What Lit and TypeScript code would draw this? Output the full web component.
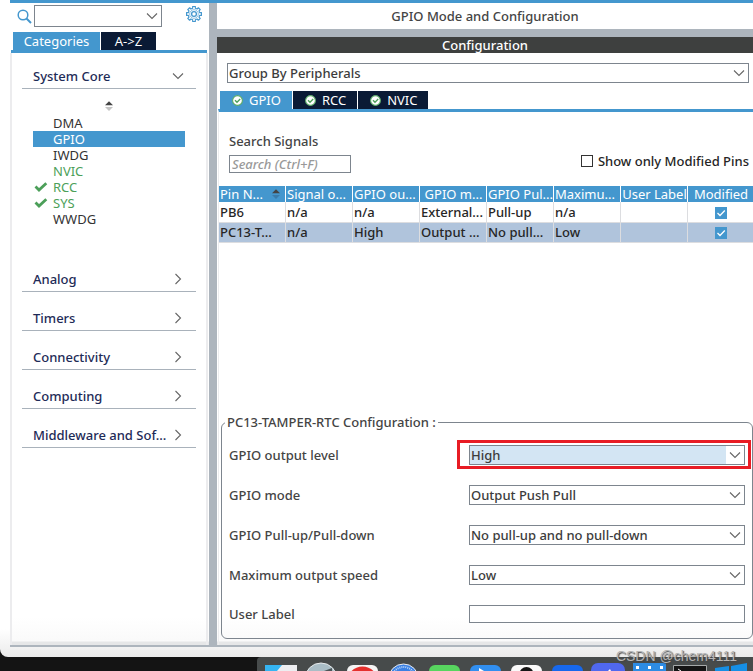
import { LitElement, html, svg, css } from "lit";
import { customElement, property } from "lit/decorators.js";
import { classMap } from "lit/directives/class-map.js";

const down = html`<svg class="chev" width="12" height="8" viewBox="0 0 12 8" aria-hidden="true"><path d="M1 1.500 6 6.500 11 1.500" fill="none" stroke="#666" stroke-width="1.100"/></svg>`;
const right = html`<svg class="chev" width="12" height="12" viewBox="0 0 12 12" aria-hidden="true"><path d="M3.500 1 8.500 6 3.500 11" fill="none" stroke="#666" stroke-width="1.100"/></svg>`;
const sorter = (bottom: string) => html`<svg class="sorter" width="8" height="10" viewBox="0 0 8 10" aria-hidden="true"><path d="M0 4.300 4 .3 8 4.300z" fill="#444"/><path d="M0 6 4 10 8 6z" fill=${bottom}/></svg>`;
const okBadge = html`<svg width="11" height="11" viewBox="0 0 11 11" aria-hidden="true"><circle cx="5.500" cy="5.500" r="4.900" fill="#fff" stroke="#5aab66" stroke-width="1.100"/><path d="M3 5.200 5 7.300 8.200 4" fill="none" stroke="#4c9f59" stroke-width="1.300"/></svg>`;
const doneMark = html`<svg width="14" height="10" viewBox="0 0 14 10" aria-hidden="true"><path d="M1.500 4.500 5 8 12.300 1.200" fill="none" stroke="#4c9f59" stroke-width="2.800"/></svg>`;

const gearPath = Array.from({ length: 8 }, (_, i) => {
  const pt = (r: number, deg: number) => {
    const a = ((i * 45 + deg) * Math.PI) / 180;
    return `${(8 + r * Math.sin(a)).toFixed(2)} ${(8 - r * Math.cos(a)).toFixed(2)}`;
  };
  return `${i ? "L" : "M"}${pt(5.9, -13)}L${pt(7.6, -10)}L${pt(7.6, 10)}L${pt(5.9, 13)}`;
}).join("") + "Z";

const shared = css`
  :host, * { box-sizing: border-box; }
  button, select, input { font: inherit; color: inherit; border-radius: 0; margin: 0; }
  button { border: 0; padding: 0; background: none; text-align: left; cursor: default; }
  .combo { display: grid; grid-template-columns: minmax(0, 1fr) 19px; align-items: center; height: 20px; border: 1px solid #7d858e; background: #fff; color: #3c3c3c; }
  .combo select { grid-area: 1 / 1 / 2 / 3; width: 100%; height: 18px; padding: 0 20px 0 1px; border: 0; background: none; appearance: none; outline: none; line-height: 18px; }
  .combo .chev { grid-area: 1 / 2; justify-self: center; pointer-events: none; }
`;

@customElement("combo-box")
class ComboBox extends LitElement {
  @property() value = "";
  @property() label = "";
  @property({ type: Boolean }) active = false;
  static styles = [shared, css`
    :host { display: block; }
    .tall { height: 22px; }
    .active { background: linear-gradient(to left, #fff 18px, #d3e5f3 18px); }
  `];
  render() {
    return html`<div class=${classMap({ combo: true, active: this.active, tall: !this.value })}>
      <select aria-label=${this.label}><option>${this.value}</option></select>${down}
    </div>`;
  }
}

@customElement("category-panel")
class CategoryPanel extends LitElement {
  static styles = [shared, css`
    :host { display: flex; flex-direction: column; width: 199px; flex: none; }
    .search { display: flex; align-items: center; height: 29px; padding: 0 7px 4px 7px; }
    .search combo-box { width: 128px; margin: 0 auto 0 2px; }
    .tabs { display: flex; gap: 1px; height: 18px; margin: 0 3px; }
    .tab { width: 87px; background: #4497ce; color: #fff; text-align: center; line-height: 17px; }
    .tab.dark { width: 55px; background: #0a1a35; }
    .tree { flex: 1; margin-right: 1px; padding: 14px 10px; border: solid #ececee; border-width: 0 2px; }
    .rule { height: 3px; margin: 0 2px 0 1px; background: #4497ce; }
    .group { display: flex; width: 100%; height: 22px; padding: 0 12px 4px 11px; align-items: center; justify-content: space-between; border-bottom: 1px solid #a9b2bb; color: #1e2b57; font-weight: 500; white-space: nowrap; }
    .group + .group { margin-top: 17px; }
    .list { margin: 0 11px 43px; }
    .sorter { display: block; margin: 12px auto 4px; }
    ul { margin: 0; padding: 0; list-style: none; }
    li { display: grid; grid-template-columns: 20px 1fr; align-items: center; height: 16px; line-height: 16px; color: #333; }
    li.on { background: #4497ce; color: #fff; }
    li.green { color: #4c9f59; }
    li b { grid-column: 2; font-weight: 400; }
    li svg { grid-area: 1 / 1; margin-left: 1px; }
  `];
  render() {
    const items: [string, string, boolean][] = [["DMA", "", false], ["GPIO", "on", false], ["IWDG", "", false], ["NVIC", "green", false], ["RCC", "green", true], ["SYS", "green", true], ["WWDG", "", false]];
    return html`
      <div class="search">
        <svg width="15" height="16" viewBox="0 0 15 16" aria-hidden="true"><circle cx="6" cy="7" r="4.800" fill="none" stroke="#4497ce" stroke-width="1.500"/><path d="m9.500 10.500 4.500 4.500" stroke="#4497ce" stroke-width="2"/></svg>
        <combo-box label="Find a peripheral"></combo-box>
        <button aria-label="Settings"><svg width="16" height="16" viewBox="0 0 16 16"><path d=${gearPath} fill="none" stroke="#4497ce" stroke-width="1.200" stroke-linejoin="round"/><circle cx="8" cy="8" r="4.300" fill="none" stroke="#4497ce" stroke-width=".6"/><circle cx="8" cy="8" r="2.400" fill="none" stroke="#4497ce" stroke-width="1.300"/></svg></button>
      </div>
      <div class="tabs"><button class="tab">Categories</button><button class="tab dark">A-&gt;Z</button></div>
      <div class="rule"></div>
      <div class="tree">
        <button class="group">System Core ${down}</button>
        <div class="list">
          ${sorter("#c4c4c4")}
          <ul>${items.map(([name, tone, done]) => html`<li class=${tone}>${done ? doneMark : ""}<b>${name}</b></li>`)}</ul>
        </div>
        ${["Analog", "Timers", "Connectivity", "Computing", "Middleware and Sof..."].map((g) => html`<button class="group">${g}${right}</button>`)}
      </div>`;
  }
}

@customElement("config-panel")
class ConfigPanel extends LitElement {
  static styles = [shared, css`
    :host { display: flex; flex-direction: column; flex: 1; min-width: 0; color: #444; font-weight: 500; }
    h1, h2 { margin: 0; font-size: 13px; font-weight: 500; text-align: center; }
    h1 { height: 26px; line-height: 26px; }
    h2 { height: 16px; margin-bottom: 10px; background: #3e403f; color: #fff; line-height: 16px; }
    .split { height: 8px; background: #adb5bd; }
    .grouping { margin: 0 4px 8px 10px; }
    .tabs { display: flex; gap: 1px; padding-left: 3px; font-weight: 400; }
    .tab { display: flex; align-items: center; justify-content: center; gap: 6px; height: 18px; padding: 0 11px 0 12px; background: #0a1a35; color: #fff; line-height: 18px; }
    .tab.on { background: #4497ce; }
    .body { flex: 1; display: flex; flex-direction: column; margin-left: 1px; border-top: 3px solid #4497ce; border-left: 1px solid #ececee; }
    .tools { display: flex; justify-content: space-between; align-items: flex-end; padding: 20px 4px 0 10px; }
    .find { display: flex; flex-direction: column; gap: 4px; line-height: 19px; }
    .text { height: 18px; padding: 0 2px; border: 1px solid #7d858e; background: #fff; outline: none; }
    .find .text { width: 122px; font-style: italic; }
    .text::placeholder { color: #999; opacity: 1; }
    .only { display: flex; align-items: center; gap: 5px; height: 24px; color: #262626; }
    input[type="checkbox"] { appearance: none; display: block; width: 12px; height: 12px; border: 1px solid #333; background: #fff; }
    td input[type="checkbox"] { margin: 0 auto; border: 0; background: #4497ce; }
    .mark { display: grid; justify-items: center; align-items: center; }
    .mark > * { grid-area: 1 / 1; pointer-events: none; }
    table { width: 100%; margin: 13px 0 24px; table-layout: fixed; border-collapse: separate; border-spacing: 0; color: #262626; }
    col { width: 67px; }
    col:last-child { width: auto; }
    th, td { overflow: hidden; padding: 0 0 0 1px; text-align: left; white-space: nowrap; border-right: 1px solid #dcdde0; }
    th { height: 16px; line-height: 16px; font-weight: 400; background: #4497ce; color: #fff; border-color: #fff; }
    th div { display: flex; align-items: center; justify-content: space-between; padding-right: 5px; }
    td { height: 20px; line-height: 19px; border-bottom: 1px solid #dcdde0; }
    tr:first-child td { padding-top: 1px; height: 21px; }
    th.mid { text-align: center; }
    tr.sel td { background: #b0c4dc; }
    th:last-child, td:last-child { border-right: 0; }
    fieldset { min-width: 0; margin: auto 0 6px 2px; padding: 14px 7px 15px; border: 1px solid #7d858e; border-radius: 6px; }
    legend { margin-left: -4px; padding: 0 2px; line-height: 18px; }
    .form { display: grid; grid-template-columns: 240px minmax(0, 1fr); row-gap: 20px; align-items: center; }
    .form label { line-height: 20px; }
    .form label:last-of-type { line-height: 18px; }
    .field { position: relative; }
    .field .text { display: block; width: 100%; }
    .ring { position: absolute; inset: -5px -6px -4px -12px; border: 3px solid #e81c24; pointer-events: none; }
  `];
  render() {
    const heads = ["Pin N...", "Signal o...", "GPIO ou...", "GPIO m...", "GPIO Pul...", "Maximu...", "User Label", "Modified"];
    const rows = [
      ["PB6", "n/a", "n/a", "External...", "Pull-up", "n/a", ""],
      ["PC13-T...", "n/a", "High", "Output ...", "No pull...", "Low", ""],
    ];
    const fields = [["GPIO output level", "High"], ["GPIO mode", "Output Push Pull"], ["GPIO Pull-up/Pull-down", "No pull-up and no pull-down"], ["Maximum output speed", "Low"]];
    return html`
      <h1>GPIO Mode and Configuration</h1>
      <div class="split"></div>
      <h2>Configuration</h2>
      <combo-box class="grouping" label="Grouping" value="Group By Peripherals"></combo-box>
      <div class="tabs">${["GPIO", "RCC", "NVIC"].map((t, i) => html`<button class=${classMap({ tab: true, on: i === 0 })}>${okBadge}${t}</button>`)}</div>
      <div class="body">
        <div class="tools">
          <div class="find"><label for="find">Search Signals</label><input id="find" class="text" placeholder="Search (Ctrl+F)"></div>
          <label class="only"><input type="checkbox">Show only Modified Pins</label>
        </div>
        <table>
          <colgroup>${heads.map(() => html`<col>`)}</colgroup>
          <thead><tr>${heads.map((h, i) => html`<th class=${i === 3 || i > 5 ? "mid" : ""}>${i ? h : html`<div>${h}${sorter("#3a7cab")}</div>`}</th>`)}</tr></thead>
          <tbody>${rows.map((r, i) => html`<tr class=${i ? "sel" : ""}>${r.map((c) => html`<td>${c}</td>`)}<td><div class="mark"><input type="checkbox" checked aria-label="Modified"><svg width="12" height="12" viewBox="0 0 12 12" aria-hidden="true"><path d="M2.500 6 5 8.500 9.800 3.500" fill="none" stroke="#fff" stroke-width="1.300"/></svg></div></td></tr>`)}</tbody>
        </table>
        <fieldset>
          <legend>PC13-TAMPER-RTC Configuration :</legend>
          <div class="form">
            ${fields.map(([l, v], i) => html`<label>${l}</label><div class="field"><combo-box label=${l} value=${v} ?active=${i === 0}></combo-box>${i ? "" : html`<div class="ring"></div>`}</div>`)}
            <label for="user">User Label</label><div class="field"><input id="user" class="text"></div>
          </div>
        </fieldset>
      </div>`;
  }
}

@customElement("app-root")
class AppRoot extends LitElement {
  static styles = [shared, css`
    :host { display: flex; flex-direction: column; min-height: 100vh; position: relative; overflow: hidden; background: #141414; font: 13px/18px "Noto Sans", "Open Sans", sans-serif; color: #333; }
    .window { flex: 1; display: flex; flex-direction: column; padding: 0 0 10px 10px; border-bottom-left-radius: 8px; background: linear-gradient(to top, #ebebeb, #fff 28px); }
    .panes { flex: 1; display: flex; border-top: 3px solid #4497ce; border-bottom: 2px solid #adb5bd; background: linear-gradient(to top, #e6e7e8 3px, #fafafa 4px, #fff 28px); }
    .bar { width: 8px; background: #adb5bd; }
    .dock { height: 14px; margin-left: 257px; overflow: hidden; border-top-left-radius: 4px; background: #474b4b; }
    .dock svg { display: block; }
    .credit { position: absolute; right: 16px; bottom: 6px; color: #b4b4b4; font: 14px/18px "Liberation Sans", sans-serif; text-shadow: 1px 1px 1px #444; }
  `];
  render() {
    return html`
      <div class="window">
        <div class="panes"><category-panel></category-panel><div class="bar"></div><config-panel></config-panel></div>
      </div>
      <div class="dock">
        <svg width="496" height="14" viewBox="257 657 496 14" aria-hidden="true">
          ${svg`
          <path d="M265 665h32v6h-32z" fill="#eceef1"/><path d="M265 665h17l-5 6h-12z" fill="#35b5f3"/>
          <circle cx="321" cy="679" r="16" fill="#a9bdc6" stroke="#e6eaec"/><path d="m324 671 8-3v3z" fill="#4c5558"/>
          <rect x="347" y="665" width="31" height="20" rx="6" fill="#f4f4f4"/><circle cx="362.500" cy="682" r="15.500" fill="#e5302d"/>
          <circle cx="403.500" cy="679" r="15" fill="#3a80e4" stroke="#eee"/><circle cx="403.500" cy="679" r="12" fill="none" stroke="#b8d4f7" stroke-width="2" stroke-dasharray="1 1"/>
          <rect x="429" y="665" width="31" height="20" rx="6" fill="#57d55f"/>
          <rect x="470" y="665" width="31" height="20" rx="6" fill="#318ff0"/><path d="m479 668 5 3h-5z" fill="#fff"/>
          <rect x="511" y="665" width="31" height="20" rx="6" fill="#fafafa"/><circle cx="526.500" cy="674" r="7" fill="#151515"/>
          <rect x="552" y="665" width="31" height="20" rx="6" fill="#1768ec"/>
          <rect x="591" y="663" width="34" height="20" rx="7" fill="#5068ee"/><path d="m608 671 2-2 1 2z" fill="#fff"/>
          <path d="M633 663h33v8h-33z" fill="#2d8ce4"/><path d="M636 666h3v3h-3zM648 666h3v3h-3zM660 666h3v3h-3z" fill="#fff"/>
          <path d="M673.500 665.500h33v8h-33z" fill="#151515" stroke="#a5a9a9"/><path d="m678 669 3 2" stroke="#fff"/>
          <path d="M715 668l14-2v5h-14zM731 666l16-3v8h-16z" fill="#168fe5"/>`}
        </svg>
      </div>
      <div class="credit">CSDN @chem4111</div>`;
  }
}
